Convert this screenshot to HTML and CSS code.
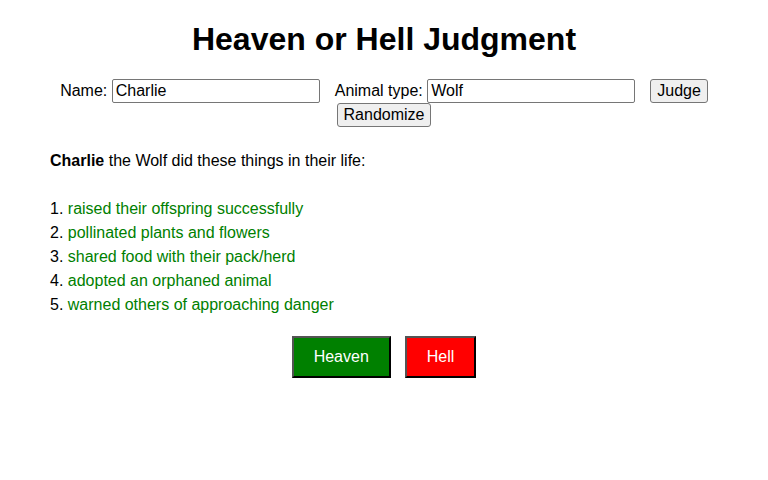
FILE: index.html
```html
<!DOCTYPE html>
<html>
<head>
<meta charset="utf-8">
<title>Heaven or Hell Judgment</title>
<link rel="stylesheet" href="styles.css">
</head>
<body>
<div class="page">
  <h1 class="title">Heaven or Hell Judgment</h1>
  <div class="form"><label class="lbl">Name:</label> <input class="field" type="text" value="Charlie"><label class="lbl">Animal type:</label> <input class="field" type="text" value="Wolf"><button class="btn">Judge</button> <button class="btn">Randomize</button></div>
  <div class="result"><b>Charlie</b> the Wolf did these things in their life:<br><br>1. <span class="good">raised their offspring successfully</span><br>2. <span class="good">pollinated plants and flowers</span><br>3. <span class="good">shared food with their pack/herd</span><br>4. <span class="good">adopted an orphaned animal</span><br>5. <span class="good">warned others of approaching danger</span></div>
  <div class="verdict"><button class="choice heaven">Heaven</button><button class="choice hell">Hell</button></div>
</div>
</body>
</html>
```
FILE: styles.css
```css
html, body {
  margin: 0;
  padding: 0;
  background: #fff;
}
body {
  font-family: "Liberation Sans", Arial, sans-serif;
  font-size: 16px;
  color: #000;
}
.page {
  padding: 0 50px;
  overflow: hidden;
}
.title {
  text-align: center;
  font-size: 32px;
  font-weight: bold;
  margin: 21px 0 21px;
  line-height: 37px;
}
.form {
  text-align: center;
  line-height: 24px;
}
.field {
  font-family: "Liberation Sans", Arial, sans-serif;
  font-size: 16px;
  width: 208px;
  height: 24px;
  box-sizing: border-box;
  padding: 1px 3px;
  border: 1px solid #767676;
  border-radius: 2px;
  margin: 0 15px 0 0;
  vertical-align: top;
  color: #000;
}
.btn {
  font-family: "Liberation Sans", Arial, sans-serif;
  font-size: 16px;
  height: 24px;
  box-sizing: border-box;
  padding: 0 6px;
  background: #efefef;
  border: 1px solid #767676;
  border-radius: 3px;
  color: #000;
  margin: 0;
  vertical-align: top;
}
.result {
  margin-top: 22px;
  line-height: 24px;
  text-align: left;
}
.good {
  color: #008000;
}
.verdict {
  margin-top: 19px;
  text-align: center;
}
.choice {
  font-family: "Liberation Sans", Arial, sans-serif;
  font-size: 16px;
  color: #fff;
  padding: 10px 20px;
  border: 2px outset #000;
  margin: 0 7px;
  line-height: 18px;
}
.heaven {
  background: #008000;
}
.hell {
  background: #ff0000;
}
```
